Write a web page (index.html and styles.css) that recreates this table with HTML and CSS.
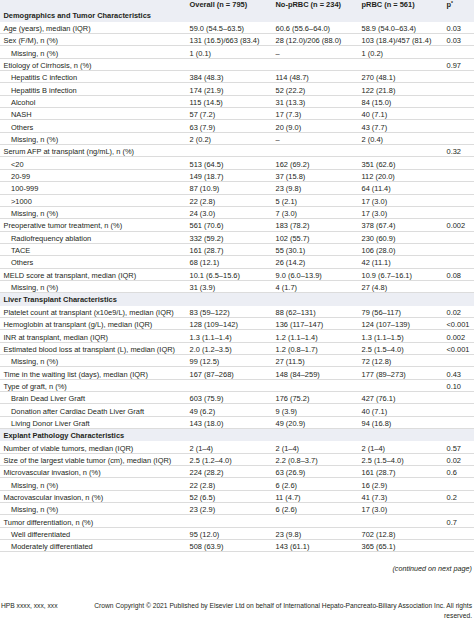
FILE: index.html
```html
<!DOCTYPE html>
<html>
<head>
<meta charset="utf-8">
<link rel="stylesheet" href="styles.css">
</head>
<body>
<div class="table">
  <div class="row head"><span></span><span>Overall (n = 795)</span><span>No-pRBC (n = 234)</span><span>pRBC (n = 561)</span><span>p<sup>*</sup></span></div>
  <div class="row section"><span>Demographics and Tumor Characteristics</span><span></span><span></span><span></span><span></span></div>
  <div class="row"><span>Age (years), median (IQR)</span><span>59.0 (54.5–63.5)</span><span>60.6 (55.6–64.0)</span><span>58.9 (54.0–63.4)</span><span>0.03</span></div>
  <div class="row"><span>Sex (F/M), n (%)</span><span>131 (16.5)/663 (83.4)</span><span>28 (12.0)/206 (88.0)</span><span>103 (18.4)/457 (81.4)</span><span>0.03</span></div>
  <div class="row sub"><span>Missing, n (%)</span><span>1 (0.1)</span><span>–</span><span>1 (0.2)</span><span></span></div>
  <div class="row"><span>Etiology of Cirrhosis, n (%)</span><span></span><span></span><span></span><span>0.97</span></div>
  <div class="row sub"><span>Hepatitis C infection</span><span>384 (48.3)</span><span>114 (48.7)</span><span>270 (48.1)</span><span></span></div>
  <div class="row sub"><span>Hepatitis B infection</span><span>174 (21.9)</span><span>52 (22.2)</span><span>122 (21.8)</span><span></span></div>
  <div class="row sub"><span>Alcohol</span><span>115 (14.5)</span><span>31 (13.3)</span><span>84 (15.0)</span><span></span></div>
  <div class="row sub"><span>NASH</span><span>57 (7.2)</span><span>17 (7.3)</span><span>40 (7.1)</span><span></span></div>
  <div class="row sub"><span>Others</span><span>63 (7.9)</span><span>20 (9.0)</span><span>43 (7.7)</span><span></span></div>
  <div class="row sub"><span>Missing, n (%)</span><span>2 (0.2)</span><span>–</span><span>2 (0.4)</span><span></span></div>
  <div class="row"><span>Serum AFP at transplant (ng/mL), n (%)</span><span></span><span></span><span></span><span>0.32</span></div>
  <div class="row sub"><span>&lt;20</span><span>513 (64.5)</span><span>162 (69.2)</span><span>351 (62.6)</span><span></span></div>
  <div class="row sub"><span>20-99</span><span>149 (18.7)</span><span>37 (15.8)</span><span>112 (20.0)</span><span></span></div>
  <div class="row sub"><span>100-999</span><span>87 (10.9)</span><span>23 (9.8)</span><span>64 (11.4)</span><span></span></div>
  <div class="row sub"><span>&gt;1000</span><span>22 (2.8)</span><span>5 (2.1)</span><span>17 (3.0)</span><span></span></div>
  <div class="row sub"><span>Missing, n (%)</span><span>24 (3.0)</span><span>7 (3.0)</span><span>17 (3.0)</span><span></span></div>
  <div class="row"><span>Preoperative tumor treatment, n (%)</span><span>561 (70.6)</span><span>183 (78.2)</span><span>378 (67.4)</span><span>0.002</span></div>
  <div class="row sub"><span>Radiofrequency ablation</span><span>332 (59.2)</span><span>102 (55.7)</span><span>230 (60.9)</span><span></span></div>
  <div class="row sub"><span>TACE</span><span>161 (28.7)</span><span>55 (30.1)</span><span>106 (28.0)</span><span></span></div>
  <div class="row sub"><span>Others</span><span>68 (12.1)</span><span>26 (14.2)</span><span>42 (11.1)</span><span></span></div>
  <div class="row"><span>MELD score at transplant, median (IQR)</span><span>10.1 (6.5–15.6)</span><span>9.0 (6.0–13.9)</span><span>10.9 (6.7–16.1)</span><span>0.08</span></div>
  <div class="row sub"><span>Missing, n (%)</span><span>31 (3.9)</span><span>4 (1.7)</span><span>27 (4.8)</span><span></span></div>
  <div class="row section"><span>Liver Transplant Characteristics</span><span></span><span></span><span></span><span></span></div>
  <div class="row"><span>Platelet count at transplant (x10e9/L), median (IQR)</span><span>83 (59–122)</span><span>88 (62–131)</span><span>79 (56–117)</span><span>0.02</span></div>
  <div class="row"><span>Hemoglobin at transplant (g/L), median (IQR)</span><span>128 (109–142)</span><span>136 (117–147)</span><span>124 (107–139)</span><span>&lt;0.001</span></div>
  <div class="row"><span>INR at transplant, median (IQR)</span><span>1.3 (1.1–1.4)</span><span>1.2 (1.1–1.4)</span><span>1.3 (1.1–1.5)</span><span>0.002</span></div>
  <div class="row"><span>Estimated blood loss at transplant (L), median (IQR)</span><span>2.0 (1.2–3.5)</span><span>1.2 (0.8–1.7)</span><span>2.5 (1.5–4.0)</span><span>&lt;0.001</span></div>
  <div class="row sub"><span>Missing, n (%)</span><span>99 (12.5)</span><span>27 (11.5)</span><span>72 (12.8)</span><span></span></div>
  <div class="row"><span>Time in the waiting list (days), median (IQR)</span><span>167 (87–268)</span><span>148 (84–259)</span><span>177 (89–273)</span><span>0.43</span></div>
  <div class="row"><span>Type of graft, n (%)</span><span></span><span></span><span></span><span>0.10</span></div>
  <div class="row sub"><span>Brain Dead Liver Graft</span><span>603 (75.9)</span><span>176 (75.2)</span><span>427 (76.1)</span><span></span></div>
  <div class="row sub"><span>Donation after Cardiac Death Liver Graft</span><span>49 (6.2)</span><span>9 (3.9)</span><span>40 (7.1)</span><span></span></div>
  <div class="row sub"><span>Living Donor Liver Graft</span><span>143 (18.0)</span><span>49 (20.9)</span><span>94 (16.8)</span><span></span></div>
  <div class="row section"><span>Explant Pathology Characteristics</span><span></span><span></span><span></span><span></span></div>
  <div class="row"><span>Number of viable tumors, median (IQR)</span><span>2 (1–4)</span><span>2 (1–4)</span><span>2 (1–4)</span><span>0.57</span></div>
  <div class="row"><span>Size of the largest viable tumor (cm), median (IQR)</span><span>2.5 (1.2–4.0)</span><span>2.2 (0.8–3.7)</span><span>2.5 (1.5–4.0)</span><span>0.02</span></div>
  <div class="row"><span>Microvascular invasion, n (%)</span><span>224 (28.2)</span><span>63 (26.9)</span><span>161 (28.7)</span><span>0.6</span></div>
  <div class="row sub"><span>Missing, n (%)</span><span>22 (2.8)</span><span>6 (2.6)</span><span>16 (2.9)</span><span></span></div>
  <div class="row"><span>Macrovascular invasion, n (%)</span><span>52 (6.5)</span><span>11 (4.7)</span><span>41 (7.3)</span><span>0.2</span></div>
  <div class="row sub"><span>Missing, n (%)</span><span>23 (2.9)</span><span>6 (2.6)</span><span>17 (3.0)</span><span></span></div>
  <div class="row"><span>Tumor differentiation, n (%)</span><span></span><span></span><span></span><span>0.7</span></div>
  <div class="row sub"><span>Well differentiated</span><span>95 (12.0)</span><span>23 (9.8)</span><span>702 (12.8)</span><span></span></div>
  <div class="row sub"><span>Moderately differentiated</span><span>508 (63.9)</span><span>143 (61.1)</span><span>365 (65.1)</span><span></span></div>
</div>
<p class="continued">(continued on next page)</p>
<footer class="footer">
  <span class="journal">HPB xxxx, xxx, xxx</span>
  <span class="copy">Crown Copyright © 2021 Published by Elsevier Ltd on behalf of International Hepato-Pancreato-Biliary Association Inc. All rights<br>reserved.</span>
</footer>
</body>
</html>
```

FILE: styles.css
```css
html, body {
  margin: 0;
  padding: 0;
  background: #ffffff;
}
body {
  width: 474px;
  font-family: "Liberation Sans", Arial, sans-serif;
  color: #231f20;
  font-size: 7.45px;
}
.table {
  display: flex;
  flex-direction: column;
}
.row {
  display: grid;
  grid-template-columns: 186px 86px 86px 85px 1fr;
  height: 12.35px;
  box-sizing: border-box;
  padding-top: 2.6px;
  border-bottom: 1px solid #dcdcdc;
  align-items: center;
  white-space: nowrap;
}
.row > span {
  padding-left: 3.5px;
  line-height: 1;
}
.row.head {
  height: 9.35px;
  padding-top: 0.6px;
  background: #eceef4;
  border-bottom: none;
  font-weight: bold;
}
.row.head sup {
  font-size: 5px;
  vertical-align: 2px;
  line-height: 0;
}
.row.section {
  background: #eceef4;
  font-weight: bold;
  border-bottom: none;
  padding-top: 1.4px;
}
.row.sub > span:first-child {
  padding-left: 11px;
}
.continued {
  margin: 12px 0 0;
  text-align: right;
  padding-right: 2px;
  font-style: italic;
  font-size: 7.2px;
}
.footer {
  margin-top: 28px;
  display: flex;
  justify-content: space-between;
  align-items: flex-start;
  font-size: 6.7px;
  line-height: 10px;
}
.journal {
  padding-left: 1px;
}
.copy {
  text-align: right;
  white-space: nowrap;
  padding-right: 2px;
}
```
